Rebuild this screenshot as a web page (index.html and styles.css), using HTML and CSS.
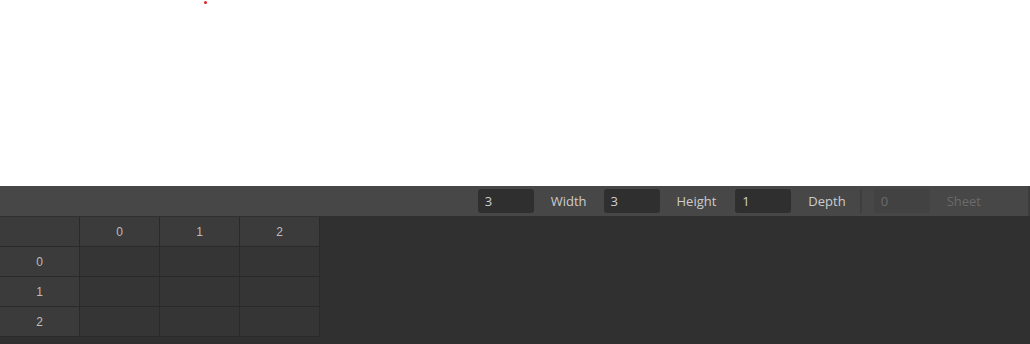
FILE: index.html
```html
<!DOCTYPE html>
<html>
<head>
<meta charset="utf-8">
<link rel="stylesheet" href="styles.css">
</head>
<body>
<div class="canvas"><span class="marker"></span></div>
<div class="panel">
  <div class="toolbar">
    <div class="field">3</div><span class="label">Width</span>
    <div class="field">3</div><span class="label wide">Height</span>
    <div class="field">1</div><span class="label last">Depth</span>
    <span class="sep"></span>
    <div class="field disabled">0</div><span class="label disabled">Sheet</span>
  </div>
  <div class="grid-area">
    <div class="grid">
      <div class="cell head corner"></div>
      <div class="cell head">0</div>
      <div class="cell head">1</div>
      <div class="cell head">2</div>
      <div class="cell head">0</div>
      <div class="cell"></div><div class="cell"></div><div class="cell"></div>
      <div class="cell head">1</div>
      <div class="cell"></div><div class="cell"></div><div class="cell"></div>
      <div class="cell head">2</div>
      <div class="cell"></div><div class="cell"></div><div class="cell"></div>
    </div>
  </div>
</div>
</body>
</html>
```

FILE: styles.css
```css
html, body {
  margin: 0;
  padding: 0;
  background: #ffffff;
  width: 1030px;
  height: 344px;
  overflow: hidden;
}
.canvas {
  height: 186px;
  position: relative;
  background: #ffffff;
}
.marker {
  position: absolute;
  left: 204px;
  top: 1px;
  width: 3px;
  height: 3px;
  border-radius: 50%;
  background: #e0202a;
}
.panel {
  height: 158px;
  background: #303030;
  display: flex;
  flex-direction: column;
}
.toolbar {
  height: 30px;
  background: #474747;
  border-right: 2px solid #3c3c3c;
  display: flex;
  align-items: center;
  justify-content: flex-end;
  padding-right: 30px;
  font-family: "Open Sans", "Noto Sans", sans-serif;
  font-size: 13px;
}
.field {
  width: 56px;
  height: 24px;
  box-sizing: border-box;
  padding-left: 7px;
  line-height: 24px;
  background: #2f2f2f;
  border-radius: 3px;
  color: #cfcfcf;
}
.field.disabled {
  background: #424242;
  color: #6a6a6a;
}
.label {
  padding: 0 17px;
  color: #cccccc;
  line-height: 24px;
}
.label.wide {
  padding-right: 19px;
}
.label.last {
  padding-right: 14px;
}
.label.disabled {
  color: #6a6a6a;
}
.sep {
  width: 2px;
  height: 24px;
  background: #3e3e3e;
  margin-right: 12px;
}
.grid-area {
  flex: 1;
  padding-top: 1px;
}
.grid {
  display: grid;
  grid-template-columns: repeat(4, 80px);
  grid-auto-rows: 30px;
  width: 320px;
  background: #2a2a2a;
}
.cell {
  background: #353535;
  border-right: 1px solid #2a2a2a;
  border-bottom: 1px solid #2a2a2a;
  box-sizing: border-box;
  display: flex;
  align-items: center;
  justify-content: center;
  font-family: "Liberation Sans", Arial, sans-serif;
  font-size: 12px;
  color: #bdbdbd;
}
.cell.head {
  background: #3b3b3b;
}
```
